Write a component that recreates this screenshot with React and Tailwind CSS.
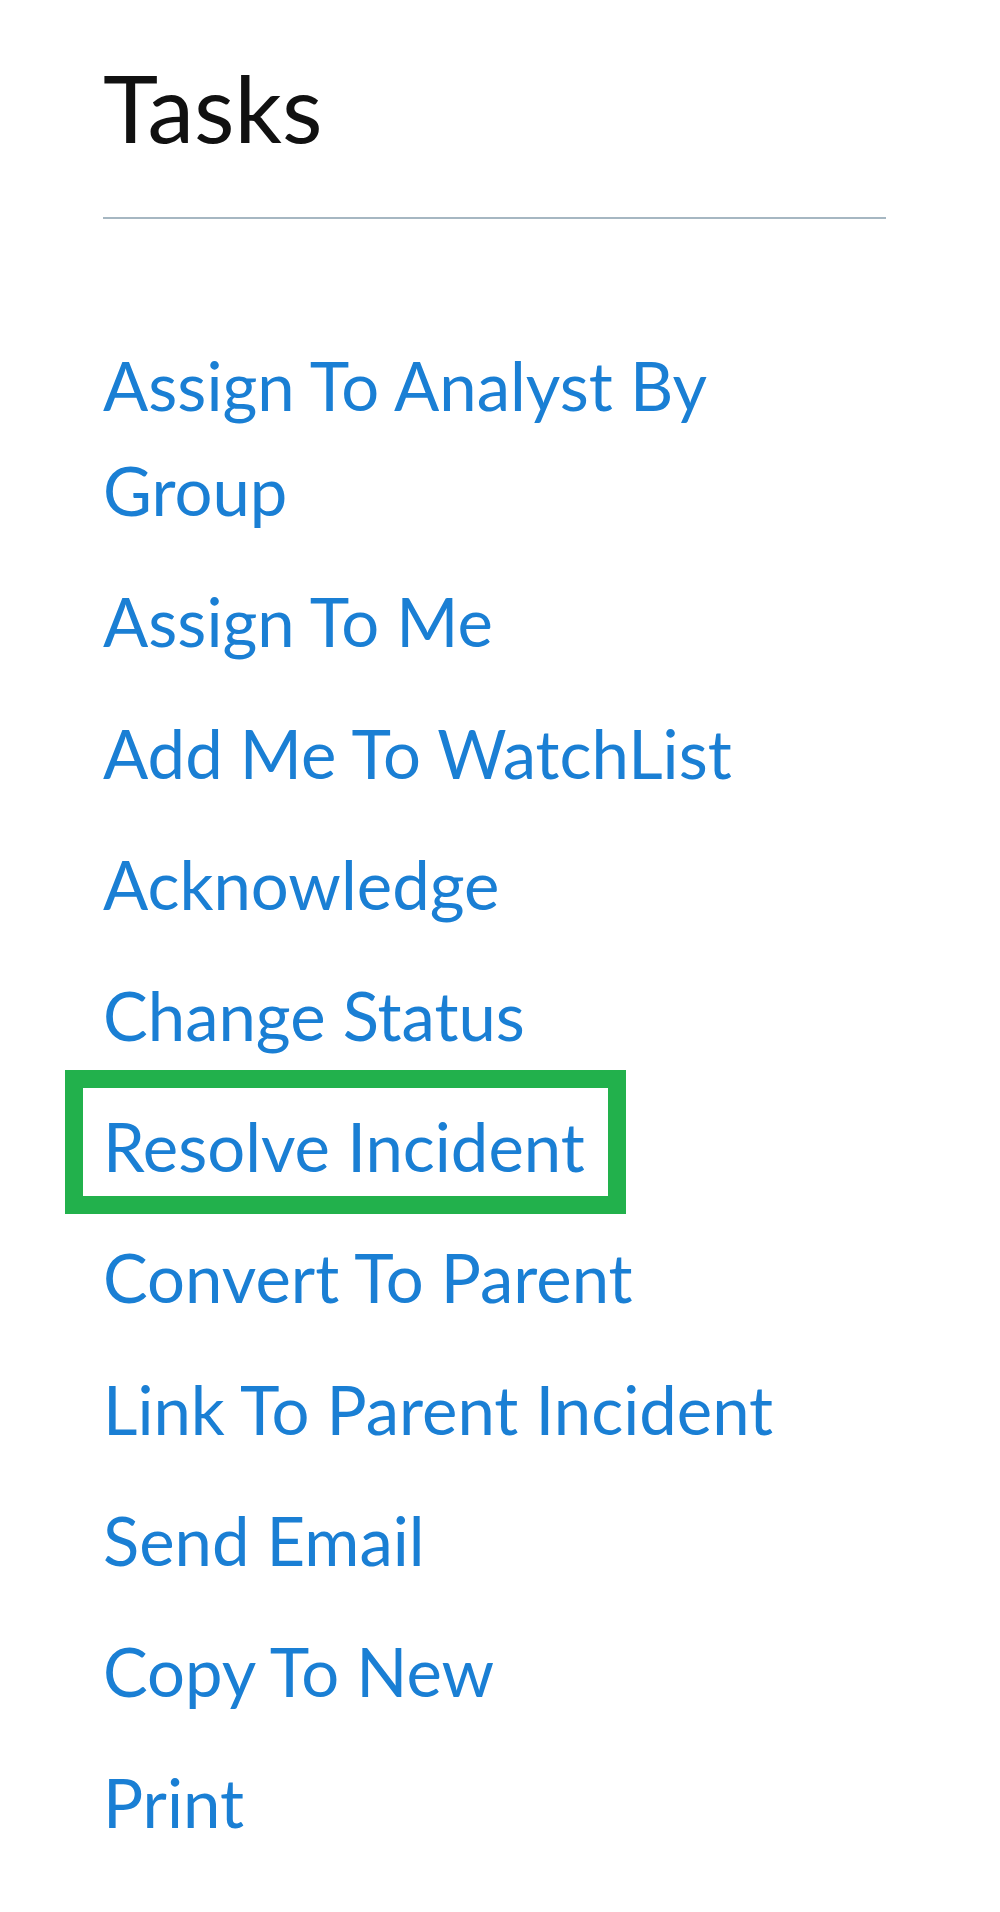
import React from 'react';

const tasks = [
  'Assign To Analyst By Group',
  'Assign To Me',
  'Add Me To WatchList',
  'Acknowledge',
  'Change Status',
  'Resolve Incident',
  'Convert To Parent',
  'Link To Parent Incident',
  'Send Email',
  'Copy To New',
  'Print',
];

const App = () => {
  return (
    <div className="min-h-[1912px] bg-white pl-[103px] pt-[51px] font-['Lato',sans-serif]">
      <h2 className="text-[93.5px] leading-[1.2] text-[#111111]">Tasks</h2>
      <div className="mt-[54px] h-[2px] w-[783px] bg-[#a6b7c2]" />

      {/* Task links */}
      <ul className="mt-[114px] flex w-[720px] flex-col gap-[26.2px]">
        {tasks.map((t) => (
          <li key={t} className="relative text-[67px] leading-[105px] text-[#1a7fd4]">
            {t === 'Resolve Incident' && (
              // highlight annotation drawn over the link
              <div className="absolute left-[-38px] top-[-24px] h-[144px] w-[561px] border-[18px] border-[#22b14c]" />
            )}
            <a href="#" className="relative">{t}</a>
          </li>
        ))}
      </ul>
    </div>
  );
};

export default App;
